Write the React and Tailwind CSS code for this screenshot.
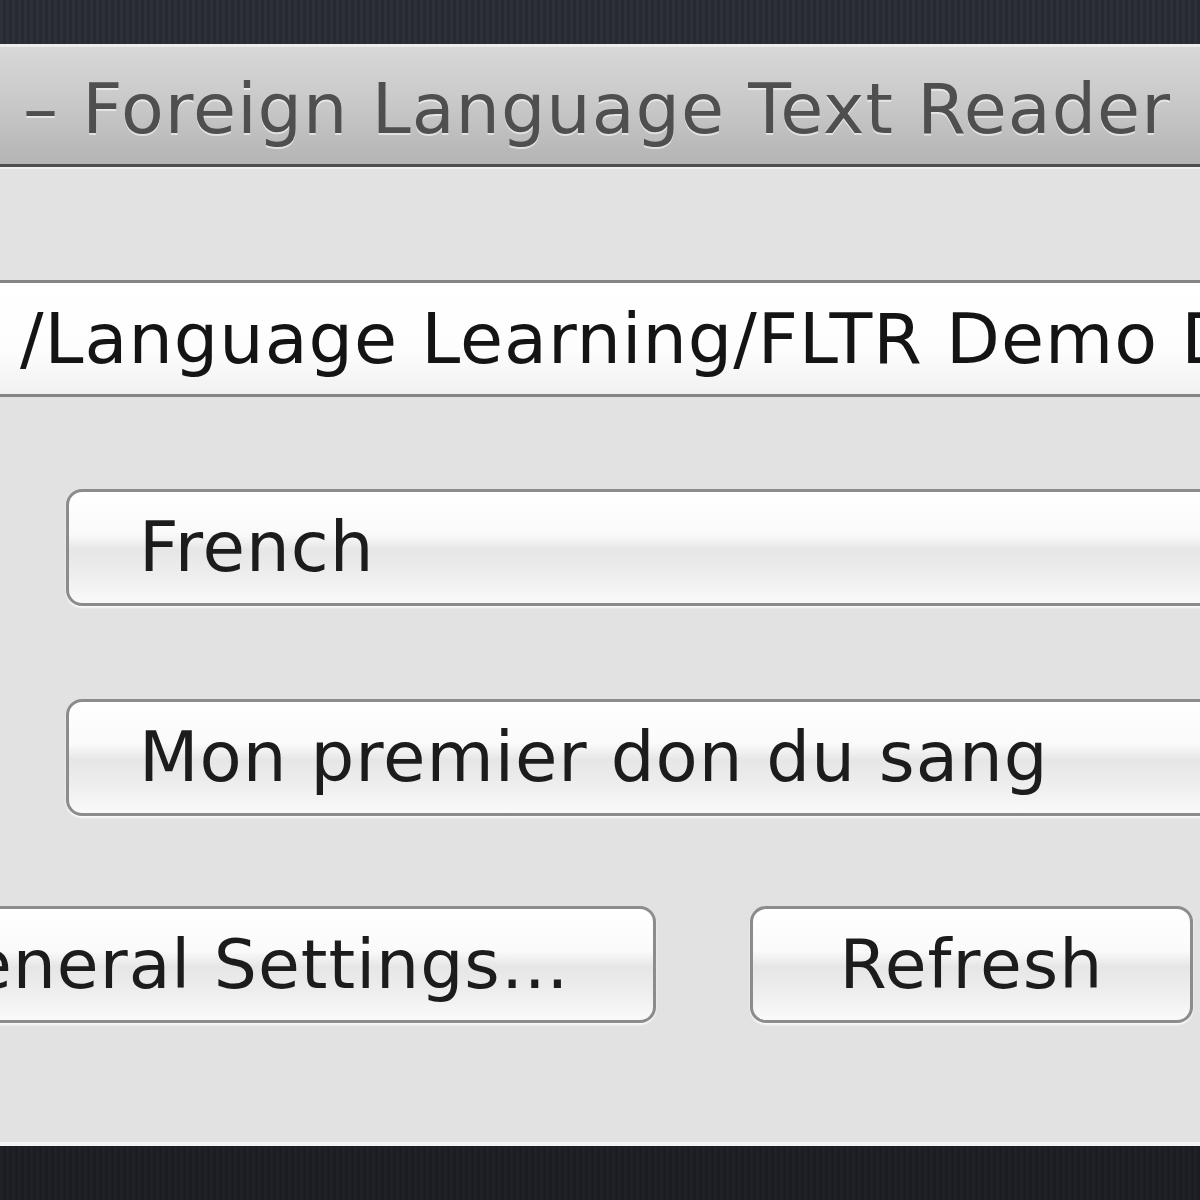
import React from "react";

const aquaFace =
  "bg-[linear-gradient(180deg,#ffffff_0%,#fafafa_38%,#e6e6e6_52%,#eeeeee_75%,#fafafa_100%)]";

function PopupField({ children }) {
  return (
    <div
      className={`ml-[66px] w-[1200px] h-[117px] shrink-0 flex items-center pl-[70px] rounded-[16px] border-[3px] border-[#8c8c8c] ${aquaFace} shadow-[0_2px_2px_rgba(255,255,255,0.8)]`}
    >
      <span className="text-[69px] leading-none tracking-[1px] text-[#1c1c1c] whitespace-nowrap">{children}</span>
    </div>
  );
}

function AquaButton({ children, className = "" }) {
  return (
    <button
      type="button"
      className={`h-[117px] shrink-0 flex items-center justify-center rounded-[16px] border-[3px] border-[#8c8c8c] ${aquaFace} shadow-[0_2px_2px_rgba(255,255,255,0.8)] ${className}`}
    >
      <span className="text-[68px] leading-none tracking-[1px] text-[#1c1c1c] whitespace-nowrap">{children}</span>
    </button>
  );
}

export default function App() {
  return (
    <div className="w-[1200px] h-[1200px] overflow-hidden flex flex-col bg-[#23262c] font-['DejaVu_Sans',_'Liberation_Sans',_sans-serif]">
      {/* desktop strip above the window */}
      <div className="h-[44px] shrink-0 bg-[repeating-linear-gradient(90deg,#2d3039_0px,#2d3039_3px,#272a32_3px,#272a32_6px)]" />

      {/* title bar */}
      <div className="h-[123px] shrink-0 flex items-center pl-[23px] border-t-[3px] border-t-[#ececec] border-b-[3px] border-b-[#4e4e4e] bg-[linear-gradient(180deg,#d8d8d8_0%,#c8c8c8_50%,#b4b4b4_100%)] overflow-hidden">
        <span className="text-[70px] leading-none tracking-[1px] text-[#4f4f4f] whitespace-nowrap [text-shadow:0_2px_0_rgba(255,255,255,0.55)] pt-[6px]">
          – Foreign Language Text Reader (
        </span>
      </div>

      {/* window content */}
      <div className="flex-1 flex flex-col bg-[#e2e2e2] border-t-[2px] border-t-[#f0f0f0] overflow-hidden">
        <div className="mt-[111px] h-[117px] shrink-0 w-[1300px] flex items-center pl-[20px] border-y-[3px] border-[#858585] bg-[linear-gradient(180deg,#ffffff_0%,#fdfdfd_60%,#f1f1f1_100%)]">
          <span className="text-[70px] leading-none tracking-[1px] text-[#141414] whitespace-nowrap">
            /Language Learning/FLTR Demo Data
          </span>
        </div>

        <div className="mt-[92px] flex">
          <PopupField>French</PopupField>
        </div>

        <div className="mt-[93px] flex">
          <PopupField>Mon premier don du sang</PopupField>
        </div>

        <div className="mt-[90px] flex gap-[94px]">
          <AquaButton className="-ml-[170px] w-[826px]">General Settings…</AquaButton>
          <AquaButton className="w-[443px]">Refresh</AquaButton>
        </div>
      </div>

      {/* desktop strip below the window */}
      <div className="h-[58px] shrink-0 border-t-[4px] border-t-[#f4f4f4] bg-[repeating-linear-gradient(90deg,#1f2127_0px,#1f2127_3px,#1b1d22_3px,#1b1d22_6px)]" />
    </div>
  );
}
